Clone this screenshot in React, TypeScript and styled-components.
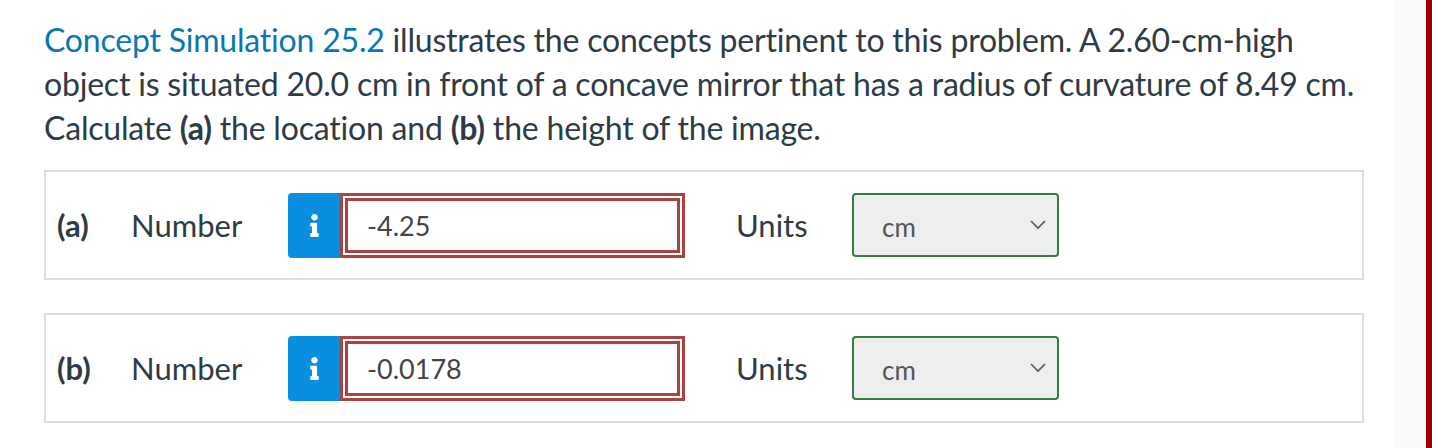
import styled, { createGlobalStyle } from "styled-components"
import { FaInfo } from "react-icons/fa"

const Global = createGlobalStyle`
    html, body {
        margin: 0;
        padding: 0;
        background: #fff;
    }
    body {
        font-family: Lato, "Open Sans", sans-serif;
        color: #2d3b45;
    }
`

const Pagina = styled.div`
    display: flex;
    height: 448px;
    width: 1432px;
    overflow: hidden;
`
const Conteudo = styled.main`
    width: 1394px;
    box-sizing: border-box;
    padding: 18px 30px 0 44px;
`
const Lateral = styled.aside`
    width: 32px;
    background: #fafafa;
`
const Faixa = styled.div`
    width: 6px;
    background: #990000;
`
const Enunciado = styled.p`
    margin: 0 0 20px 0;
    font-size: 32px;
    line-height: 44px;
    white-space: nowrap;
    letter-spacing: -0.2px;

    a {
        color: #0b77b0;
        text-decoration: none;
    }
    b {
        font-weight: 700;
    }
`
const Caixa = styled.section`
    box-sizing: border-box;
    width: 1320px;
    height: 110px;
    border: 2px solid #dcdcdc;
    display: flex;
    align-items: center;
    padding-left: 11px;
    margin-bottom: 33px;
`
const Parte = styled.span`
    width: 74px;
    font-weight: 700;
    font-size: 31px;
`
const Rotulo = styled.span<{ $largura: number }>`
    width: ${({ $largura }) => $largura}px;
    font-size: 31px;
`
const Grupo = styled.div`
    display: flex;
    height: 65px;
    margin-right: 51px;
`
const BotaoInfo = styled.button`
    width: 52px;
    height: 65px;
    border: none;
    border-radius: 4px 0 0 4px;
    background: #0a8fe0;
    color: #fff;
    display: flex;
    align-items: center;
    justify-content: center;
    padding: 0;
    svg {
        width: 9px;
        height: 23px;
    }
`
const Entrada = styled.div`
    box-sizing: border-box;
    width: 345px;
    height: 65px;
    border: 3px solid #a94442;
    box-shadow: inset 0 0 0 2px #fff, inset 0 0 0 5px #a94442, inset 0 7px 6px -4px rgba(0,0,0,0.08);
    display: flex;
    align-items: center;
    padding-left: 24px;
    font-size: 27px;
    color: #444;
`
const Seletor = styled.div`
    box-sizing: border-box;
    width: 207px;
    height: 64px;
    border: 2px solid #3a7a40;
    border-radius: 4px;
    background: #eeeeee;
    display: flex;
    align-items: center;
    justify-content: space-between;
    padding: 4px 10px 0 28px;
    font-size: 26px;
    color: #555;
    svg {
        width: 18px;
        height: 12px;
        margin-top: -4px;
    }
`

interface tipagemResposta {
    parte: string
    valor: string
}

const Resposta = ({ parte, valor }: tipagemResposta) => (
    <Caixa>
        <Parte>({parte})</Parte>
        <Rotulo $largura={157}>Number</Rotulo>
        <Grupo>
            <BotaoInfo><FaInfo /></BotaoInfo>
            <Entrada>{valor}</Entrada>
        </Grupo>
        <Rotulo $largura={116}>Units</Rotulo>
        <Seletor>
            cm
            <svg viewBox="0 0 18 12">
                <path d="M2 2 L9 9 L16 2" fill="none" stroke="#555" strokeWidth="1.6" />
            </svg>
        </Seletor>
    </Caixa>
)

const App = () => {
    return (
        <>
            <Global />
            <Pagina>
                <Conteudo>
                    <Enunciado>
                        <a href="#">Concept Simulation 25.2</a> illustrates the concepts pertinent to this problem. A 2.60-cm-high
                        <br />
                        object is situated 20.0 cm in front of a concave mirror that has a radius of curvature of 8.49 cm.
                        <br />
                        Calculate <b>(a)</b> the location and <b>(b)</b> the height of the image.
                    </Enunciado>
                    <Resposta parte="a" valor="-4.25" />
                    <Resposta parte="b" valor="-0.0178" />
                </Conteudo>
                <Lateral />
                <Faixa />
            </Pagina>
        </>
    )
}

export default App
